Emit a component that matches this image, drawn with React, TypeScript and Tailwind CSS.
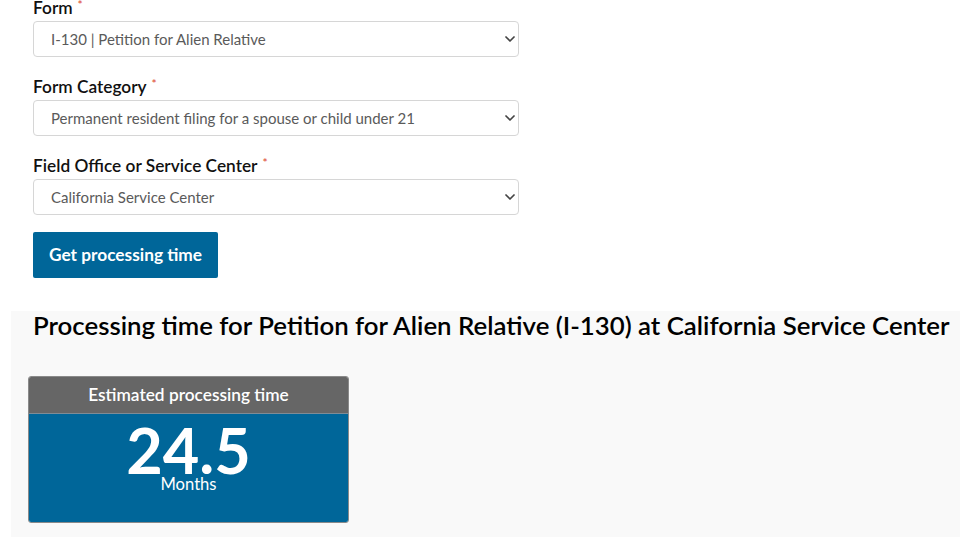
import { ChevronDown } from "lucide-react"

type SelectFieldProps = {
  label: string
  value: string
}

function SelectField({ label, value }: SelectFieldProps) {
  return (
    <div className="flex flex-col">
      <label className="flex h-[21px] items-start text-[17.3px] font-semibold leading-[16px] text-[#111]">
        {label}
        <span className="-mt-[2px] ml-[5px] text-[12px] leading-[14px] text-[#e0573f]">*</span>
      </label>
      <div className="relative w-[486px]">
        <select
          defaultValue={value}
          className="h-[36px] w-full appearance-none rounded-[4px] border border-[#d6d6d6] bg-white pl-[17px] pr-8 text-[15px] text-[#5a5a5a] outline-none"
        >
          <option>{value}</option>
        </select>
        <ChevronDown
          className="pointer-events-none absolute right-[1px] top-1/2 size-[16px] -translate-y-1/2 text-[#444]"
          strokeWidth={2.6}
          aria-hidden="true"
        />
      </div>
    </div>
  )
}

export default function App() {
  return (
    <div className="h-[537px] w-[960px] overflow-hidden bg-white font-['Lato',sans-serif]">
      <div className="flex flex-col gap-[22px] pl-[33px]">
        <SelectField label="Form" value="I-130 | Petition for Alien Relative" />
        <SelectField
          label="Form Category"
          value="Permanent resident filing for a spouse or child under 21"
        />
        <SelectField label="Field Office or Service Center" value="California Service Center" />
      </div>

      <div className="pl-[33px] pt-[17px]">
        <button className="h-[46px] rounded-[2px] bg-[#006699] px-[16px] text-[17.3px] font-bold text-white">
          Get processing time
        </button>
      </div>

      <section className="ml-[11px] mt-[33px] h-[300px] bg-[#f9f9f9] pl-[17px]">
        <h2 className="pl-[5px] text-[25.8px] font-semibold leading-[29px] text-black">
          Processing time for Petition for Alien Relative (I-130) at California Service Center
        </h2>

        <div className="mt-[36px] w-[321px] overflow-hidden rounded-[3px] border border-[#8a8a8a]">
          <div className="flex h-[37px] items-center justify-center border-b border-[#7f8c96] bg-[#666666] text-[17.3px] font-semibold text-white">
            Estimated processing time
          </div>
          <div className="flex h-[108px] flex-col items-center bg-[#006699] pt-[11px] text-white">
            <span className="text-[63px] font-bold leading-[50px]">24.5</span>
            <span className="mt-[1px] text-[16.6px] leading-[16px]">Months</span>
          </div>
        </div>
      </section>
    </div>
  )
}
